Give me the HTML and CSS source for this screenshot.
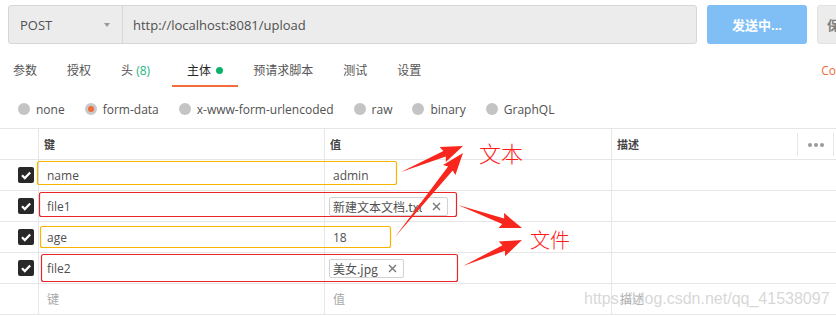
FILE: index.html
```html
<!DOCTYPE html>
<html lang="zh">
<head>
<meta charset="utf-8">
<title>Postman</title>
<link rel="stylesheet" href="styles.css">
</head>
<body>
<div class="topbar">
  <div class="urlgroup">
    <div class="method"><span>POST</span><span class="caret"></span></div>
    <div class="url">http://localhost:8081/upload</div>
  </div>
  <button class="send">发送中...</button>
  <button class="save">保存</button>
</div>

<div class="tabs">
  <div class="tab">参数</div>
  <div class="tab">授权</div>
  <div class="tab hd">头 <span class="count">(8)</span></div>
  <div class="tab active">主体<span class="dot"></span></div>
  <div class="tab">预请求脚本</div>
  <div class="tab">测试</div>
  <div class="tab">设置</div>
  <div class="cookies">Cookies</div>
</div>

<div class="modes">
  <label class="radio"><i></i>none</label>
  <label class="radio on"><i></i>form-data</label>
  <label class="radio"><i></i>x-www-form-urlencoded</label>
  <label class="radio"><i></i>raw</label>
  <label class="radio"><i></i>binary</label>
  <label class="radio"><i></i>GraphQL</label>
</div>

<div class="grid">
  <div class="row head">
    <div class="c c0"></div>
    <div class="c c1">键</div>
    <div class="c c2">值</div>
    <div class="c c3">描述</div>
    <div class="c c4"><span class="dots"><b></b><b></b><b></b></span></div>
    <div class="c c5"></div>
  </div>
  <div class="row">
    <div class="c c0"><svg class="cb" viewBox="0 0 16 16"><rect width="16" height="16" rx="2" fill="#282828"/><path d="M4 8.3l2.8 2.8L12.2 5.6" stroke="#fff" stroke-width="2.2" fill="none"/></svg></div>
    <div class="c c1">name</div>
    <div class="c c2">admin</div>
    <div class="c c3"></div>
  </div>
  <div class="row">
    <div class="c c0"><svg class="cb" viewBox="0 0 16 16"><rect width="16" height="16" rx="2" fill="#282828"/><path d="M4 8.3l2.8 2.8L12.2 5.6" stroke="#fff" stroke-width="2.2" fill="none"/></svg></div>
    <div class="c c1">file1</div>
    <div class="c c2"><span class="chip"><span class="fname long">新建文本文档.txt</span><svg class="x" viewBox="0 0 9 9"><path d="M1 1l7 7M8 1l-7 7" stroke="#777" stroke-width="1.4"/></svg></span></div>
    <div class="c c3"></div>
  </div>
  <div class="row">
    <div class="c c0"><svg class="cb" viewBox="0 0 16 16"><rect width="16" height="16" rx="2" fill="#282828"/><path d="M4 8.3l2.8 2.8L12.2 5.6" stroke="#fff" stroke-width="2.2" fill="none"/></svg></div>
    <div class="c c1">age</div>
    <div class="c c2">18</div>
    <div class="c c3"></div>
  </div>
  <div class="row">
    <div class="c c0"><svg class="cb" viewBox="0 0 16 16"><rect width="16" height="16" rx="2" fill="#282828"/><path d="M4 8.3l2.8 2.8L12.2 5.6" stroke="#fff" stroke-width="2.2" fill="none"/></svg></div>
    <div class="c c1">file2</div>
    <div class="c c2"><span class="chip"><span class="fname">美女.jpg</span><svg class="x" viewBox="0 0 9 9"><path d="M1 1l7 7M8 1l-7 7" stroke="#777" stroke-width="1.4"/></svg></span></div>
    <div class="c c3"></div>
  </div>
  <div class="row">
    <div class="c c0"></div>
    <div class="c c1 ph">键</div>
    <div class="c c2 ph">值</div>
    <div class="c c3 ph">描述</div>
  </div>
</div>

<svg class="marks" viewBox="0 0 836 316" width="836" height="316">
  <g fill="none" stroke-width="1.2">
    <rect x="37.5" y="161.5" width="359" height="23" rx="2" stroke="#f7b500"/>
    <rect x="39.5" y="192.5" width="417" height="24" rx="2" stroke="#e8262a"/>
    <rect x="40.5" y="226.5" width="350" height="21" rx="2" stroke="#f7b500"/>
    <rect x="41.5" y="254.5" width="416" height="27" rx="2" stroke="#e8262a"/>
  </g>
  <g fill="#f8261c">
    <polygon points="401,172 445.8,156.5 445.8,161.9 463,146 439.6,147.1 443.4,150.9"/>
    <polygon points="395,237 452.7,170.4 455.4,175.1 463,153 443,165.1 448.1,166.6"/>
    <polygon points="458,205 502.2,224 498.6,228.1 522,228 504,213.1 504.2,218.4"/>
    <polygon points="463,266 504.9,250.8 505.1,256.2 522,240 498.7,241.6 502.5,245.3"/>
  </g>
  <text class="lbl" x="479" y="162" font-size="22">文本</text>
  <text class="lbl" x="530" y="248" font-size="20">文件</text>
  <text class="wm" x="584" y="304">https://blog.csdn.net/qq_41538097</text>
</svg>
</body>
</html>
```

FILE: styles.css
```css
html, body {
  margin: 0;
  padding: 0;
}
body {
  width: 836px;
  height: 316px;
  overflow: hidden;
  position: relative;
  background: #fff;
  color: #505050;
  font-family: "Open Sans", "Noto Sans CJK SC", sans-serif;
  font-size: 12px;
}

/* top bar */
.topbar {
  display: flex;
  gap: 10px;
  padding: 5px 0 0 8px;
  height: 39px;
}
.urlgroup {
  display: flex;
  flex-shrink: 0;
  width: 689px;
  height: 39px;
  box-sizing: border-box;
  border: 1px solid #d6d6d6;
  border-radius: 3px;
  background: #ececec;
}
.method {
  width: 114px;
  box-sizing: border-box;
  border-right: 1px solid #d6d6d6;
  display: flex;
  align-items: center;
  justify-content: space-between;
  padding: 0 12px 0 11px;
  font-size: 13px;
  color: #505050;
}
.caret {
  width: 0;
  height: 0;
  border-left: 3.5px solid transparent;
  border-right: 3.5px solid transparent;
  border-top: 4px solid #9a9a9a;
}
.url {
  display: flex;
  align-items: center;
  padding-left: 10px;
  font-size: 13px;
  color: #505050;
}
.send {
  flex-shrink: 0;
  width: 100px;
  height: 39px;
  border: none;
  border-radius: 3px;
  background: #80bff6;
  color: #fff;
  font-family: "Open Sans", "Noto Sans CJK SC", sans-serif;
  font-weight: 700;
  font-size: 13px;
  padding: 0;
}
.save {
  flex-shrink: 0;
  width: 80px;
  height: 39px;
  border: 1px solid #e2e2e2;
  border-radius: 3px;
  background: #ececec;
  color: #808080;
  font-family: "Open Sans", "Noto Sans CJK SC", sans-serif;
  font-weight: 700;
  font-size: 13px;
  text-align: left;
  padding: 0 0 0 9px;
}

/* tabs */
.tabs {
  display: flex;
  align-items: flex-end;
  width: 880px;
  box-sizing: border-box;
  margin-top: 13px;
  padding-left: 13px;
  font-size: 12px;
}
.tab {
  padding: 0 15px;
  line-height: 28px;
  height: 28px;
  border-bottom: 2px solid transparent;
  color: #555;
  white-space: nowrap;
}
.tab:first-child {
  padding-left: 0;
}
.tab.hd {
  padding-right: 22px;
}
.tab.active {
  border-bottom-color: #f26b3a;
  color: #282828;
}
.count {
  color: #26b47f;
}
.dot {
  display: inline-block;
  width: 7px;
  height: 7px;
  border-radius: 50%;
  background: #0cb26a;
  margin-left: 5px;
  vertical-align: 1px;
}
.cookies {
  margin-left: auto;
  padding-right: 15px;
  line-height: 28px;
  height: 28px;
  border-bottom: 2px solid transparent;
  color: #f26b3a;
}

/* body modes */
.modes {
  display: flex;
  align-items: center;
  gap: 20px;
  height: 30px;
  padding: 7px 0 4px 18px;
  font-size: 12px;
  color: #505050;
}
.radio {
  display: flex;
  align-items: center;
  gap: 6px;
}
.radio i {
  display: block;
  width: 12px;
  height: 12px;
  border-radius: 50%;
  background: #c4c4c4;
  box-sizing: border-box;
}
.radio.on i {
  background: #f26b3a;
  border: 3px solid #c9c9c9;
}

/* grid */
.grid {
  border-top: 1px solid #e6e6e6;
}
.row {
  display: grid;
  grid-template-columns: 38px 286px 287px 186px 36px 3px;
  height: 30px;
  border-bottom: 1px solid #e6e6e6;
}
.c {
  display: flex;
  align-items: center;
  min-width: 0;
  white-space: nowrap;
}
.c1, .c2, .c3 {
  border-left: 1px solid #e6e6e6;
  padding-left: 8px;
}
.c0 {
  justify-content: flex-end;
  padding-right: 4px;
}
.head .c1, .head .c2, .head .c3 {
  padding-left: 5px;
  font-size: 11px;
  font-weight: 700;
  color: #444;
}
.head .c4, .head .c5 {
  border-left: 1px solid #e6e6e6;
  margin: 4px 0 3px;
  justify-content: center;
}
.dots {
  display: flex;
  gap: 2px;
}
.dots b {
  display: block;
  width: 4px;
  height: 4px;
  border-radius: 50%;
  background: #9a9a9a;
}
.cb {
  width: 16px;
  height: 16px;
  display: block;
}
.ph {
  color: #a8a8a8;
}

.chip {
  display: inline-flex;
  align-items: center;
  height: 19px;
  box-sizing: border-box;
  margin-left: -4px;
  padding-left: 3px;
  border: 1px solid #d2d2d2;
  border-radius: 2px;
  background: #fff;
  font-family: "Noto Sans CJK SC", "Open Sans", sans-serif;
  color: #505050;
}
.fname {
  overflow: hidden;
  white-space: nowrap;
}
.fname.long {
  max-width: 89px;
}
.x {
  width: 9px;
  height: 9px;
  margin: 0 6px 0 10px;
  display: block;
}

/* annotations overlay */
.marks {
  position: absolute;
  left: 0;
  top: 0;
  pointer-events: none;
}
.lbl {
  fill: #ff1a1a;
  font-family: "Noto Sans CJK SC", sans-serif;
  font-weight: 300;
}
.wm {
  fill: #d0d0d0;
  fill-opacity: 0.85;
  font-family: "Liberation Sans", Arial, sans-serif;
  font-size: 16px;
}
```
